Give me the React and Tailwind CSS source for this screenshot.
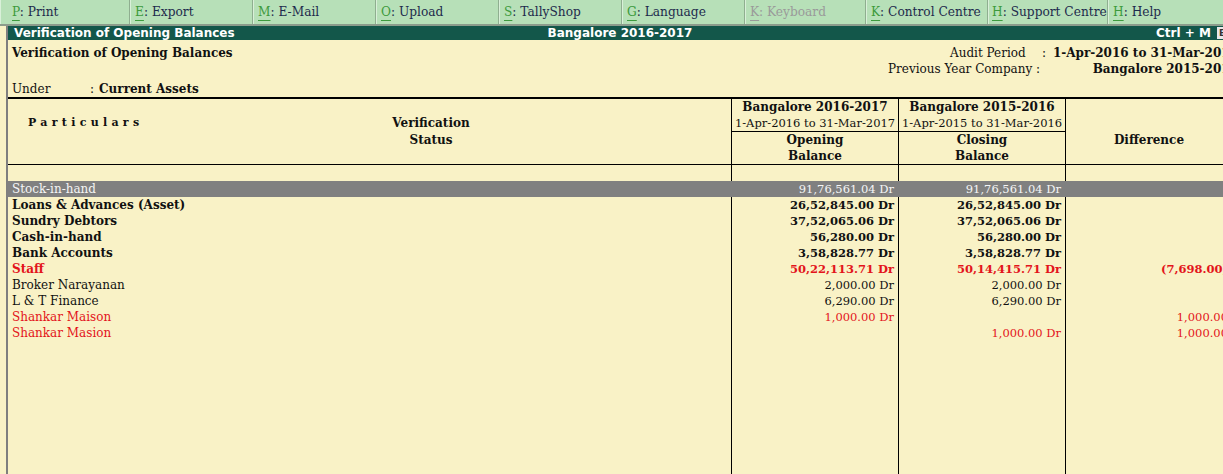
import React from "react";

// Button bar across the top
const menu = [
  { key: "P", label: "Print", w: "w-[130px] pl-[12px]" },
  { key: "E", label: "Export", w: "w-[123px] pl-[5px]" },
  { key: "M", label: "E-Mail", w: "w-[123px] pl-[5px]" },
  { key: "O", label: "Upload", w: "w-[123px] pl-[5px]" },
  { key: "S", label: "TallyShop", w: "w-[123px] pl-[5px]" },
  { key: "G", label: "Language", w: "w-[123px] pl-[5px]" },
  { key: "K", label: "Keyboard", w: "w-[121px] pl-[5px]", disabled: true },
  { key: "K", label: "Control Centre", w: "w-[122px] pl-[5px]" },
  { key: "H", label: "Support Centre", w: "w-[120px] pl-[4px]" },
  { key: "H", label: "Help", w: "flex-1 pl-[5px]" },
];

const rows = [
  { name: "" },
  { name: "Stock-in-hand", open: "91,76,561.04 Dr", close: "91,76,561.04 Dr", hl: true },
  { name: "Loans & Advances (Asset)", open: "26,52,845.00 Dr", close: "26,52,845.00 Dr", bold: true },
  { name: "Sundry Debtors", open: "37,52,065.06 Dr", close: "37,52,065.06 Dr", bold: true },
  { name: "Cash-in-hand", open: "56,280.00 Dr", close: "56,280.00 Dr", bold: true },
  { name: "Bank Accounts", open: "3,58,828.77 Dr", close: "3,58,828.77 Dr", bold: true },
  { name: "Staff", open: "50,22,113.71 Dr", close: "50,14,415.71 Dr", diff: "(7,698.00)", bold: true, red: true },
  { name: "Broker Narayanan", open: "2,000.00 Dr", close: "2,000.00 Dr" },
  { name: "L & T Finance", open: "6,290.00 Dr", close: "6,290.00 Dr" },
  { name: "Shankar Maison", open: "1,000.00 Dr", close: "", diff: "1,000.00", red: true },
  { name: "Shankar Masion", open: "", close: "1,000.00 Dr", diff: "1,000.00", red: true },
];

const TopBar = () => (
  <div className="flex h-[26px] bg-[#b7e0b8] border-b-2 border-[#8c9c8c] font-['DejaVu_Serif',serif] text-[12.2px] leading-[24px]">
    {menu.map((m, i) => (
      <div
        key={i}
        className={`${m.w} shrink-0 border-r border-[#8fae90] shadow-[inset_1px_0_0_#d9f0d9] whitespace-nowrap overflow-hidden ${
          m.disabled ? "text-[#9a9a9a]" : "text-[#1d2a4c]"
        }`}
      >
        <span
          className={`underline underline-offset-[4px] ${
            m.disabled ? "text-[#9a9a9a] decoration-[#9a9a9a]" : "text-[#3d9a3d] decoration-[#3d9a3d]"
          }`}
        >
          {m.key}
        </span>
        : {m.label}
      </div>
    ))}
  </div>
);

const App = () => {
  return (
    <div className="w-full h-[474px] overflow-hidden bg-[#f9f2c6]">
      <div className="w-[1232px] h-[474px] flex flex-col bg-[#f9f2c6] text-[#111] font-['DejaVu_Serif',serif]">
        <TopBar />

        <div className="flex flex-1 min-h-0">
          {/* left window edge */}
          <div className="w-[6px] shrink-0 bg-[#f9f2c6]" />
          <div className="w-[2px] shrink-0 bg-[#7f7f7f]" />

          <div className="flex-1 flex flex-col min-w-0">
            {/* Title bar */}
            <div className="grid grid-cols-[1fr_auto_1fr] h-[14px] bg-[#13574a] text-white font-['DejaVu_Sans',sans-serif] font-bold text-[12px] leading-[14px]">
              <div className="pl-[6px] whitespace-nowrap">Verification of Opening Balances</div>
              <div className="whitespace-nowrap">Bangalore 2016-2017</div>
              <div className="flex justify-end items-center">
                <span className="whitespace-nowrap">Ctrl + M</span>
                <span className="ml-[6px] w-[15px] h-[12px] bg-[#e9e9e9] text-[#333] text-[9px] leading-[12px] pl-[2px]">E</span>
              </div>
            </div>

            {/* Report info */}
            <div className="h-[57px] pt-[5px] text-[12px]">
              <div className="flex justify-between h-[16px] leading-[16px]">
                <div className="pl-[4px] font-bold">Verification of Opening Balances</div>
                <div className="flex w-[350px] shrink-0 mr-[-6px]">
                  <div className="w-[160px] flex justify-between pl-[62px] pr-[2px]">
                    <span>Audit Period</span>
                    <span>:</span>
                  </div>
                  <div className="flex-1 text-right font-bold whitespace-nowrap pl-[4px]">1-Apr-2016 to 31-Mar-2017</div>
                </div>
              </div>
              <div className="flex justify-end h-[17px] leading-[17px]">
                <div className="flex w-[350px] shrink-0 mr-[-6px]">
                  <div className="w-[160px] whitespace-nowrap">Previous Year Company :</div>
                  <div className="flex-1 text-right font-bold whitespace-nowrap">Bangalore 2015-2016</div>
                </div>
              </div>
              <div className="flex h-[16px] leading-[16px] mt-[3px]">
                <div className="w-[82px] pl-[4px]">Under</div>
                <div>:</div>
                <div className="ml-[5px] font-bold">Current Assets</div>
              </div>
            </div>

            {/* Column headers */}
            <div className="grid grid-cols-[723px_167px_167px_167px] border-t-2 border-b border-black text-[12px] leading-[16px]">
              <div className="flex h-[65px]">
                <div className="w-[323px] pt-[16px] pl-[20px] font-bold text-[11px] tracking-[4.3px]">Particulars</div>
                <div className="w-[200px] pt-[16px] text-center font-bold">
                  <div>Verification</div>
                  <div className="mt-[1px]">Status</div>
                </div>
              </div>
              <div className="border-l border-black text-center">
                <div className="font-bold h-[16px]">Bangalore 2016-2017</div>
                <div className="text-[11.5px] whitespace-nowrap border-b border-black h-[17px]">1-Apr-2016 to 31-Mar-2017</div>
                <div className="font-bold">Opening</div>
                <div className="font-bold">Balance</div>
              </div>
              <div className="border-l border-black text-center">
                <div className="font-bold h-[16px]">Bangalore 2015-2016</div>
                <div className="text-[11.5px] whitespace-nowrap border-b border-black h-[17px]">1-Apr-2015 to 31-Mar-2016</div>
                <div className="font-bold">Closing</div>
                <div className="font-bold">Balance</div>
              </div>
              <div className="border-l border-black text-center pt-[33px] font-bold">Difference</div>
            </div>

            {/* Body rows */}
            <div className="flex-1 flex flex-col min-h-0">
              {rows.map((r, i) => {
                const color = r.hl ? "text-[#f5f5f5]" : r.red ? "text-[#e3141b]" : "text-[#111]";
                const weight = r.bold ? "font-bold" : "font-normal";
                const line = r.hl ? "border-[#808080]" : "border-black";
                return (
                  <div
                    key={i}
                    className={`grid grid-cols-[723px_167px_167px_167px] h-[16px] leading-[16px] ${color} ${weight} ${
                      r.hl ? "bg-[#808080]" : ""
                    }`}
                  >
                    <div className="pl-[4px] text-[12px] whitespace-nowrap">{r.name}</div>
                    <div className={`border-l ${line} text-right pr-[4px] text-[11.5px] whitespace-nowrap`}>{r.open}</div>
                    <div className={`border-l ${line} text-right pr-[4px] text-[11.5px] whitespace-nowrap`}>{r.close}</div>
                    <div className={`border-l ${line} text-right pr-[4px] text-[11.5px] whitespace-nowrap`}>{r.diff}</div>
                  </div>
                );
              })}
              <div className="flex-1 grid grid-cols-[723px_167px_167px_167px]">
                <div />
                <div className="border-l border-black" />
                <div className="border-l border-black" />
                <div className="border-l border-black" />
              </div>
            </div>
          </div>
        </div>
      </div>
    </div>
  );
};

export default App;
